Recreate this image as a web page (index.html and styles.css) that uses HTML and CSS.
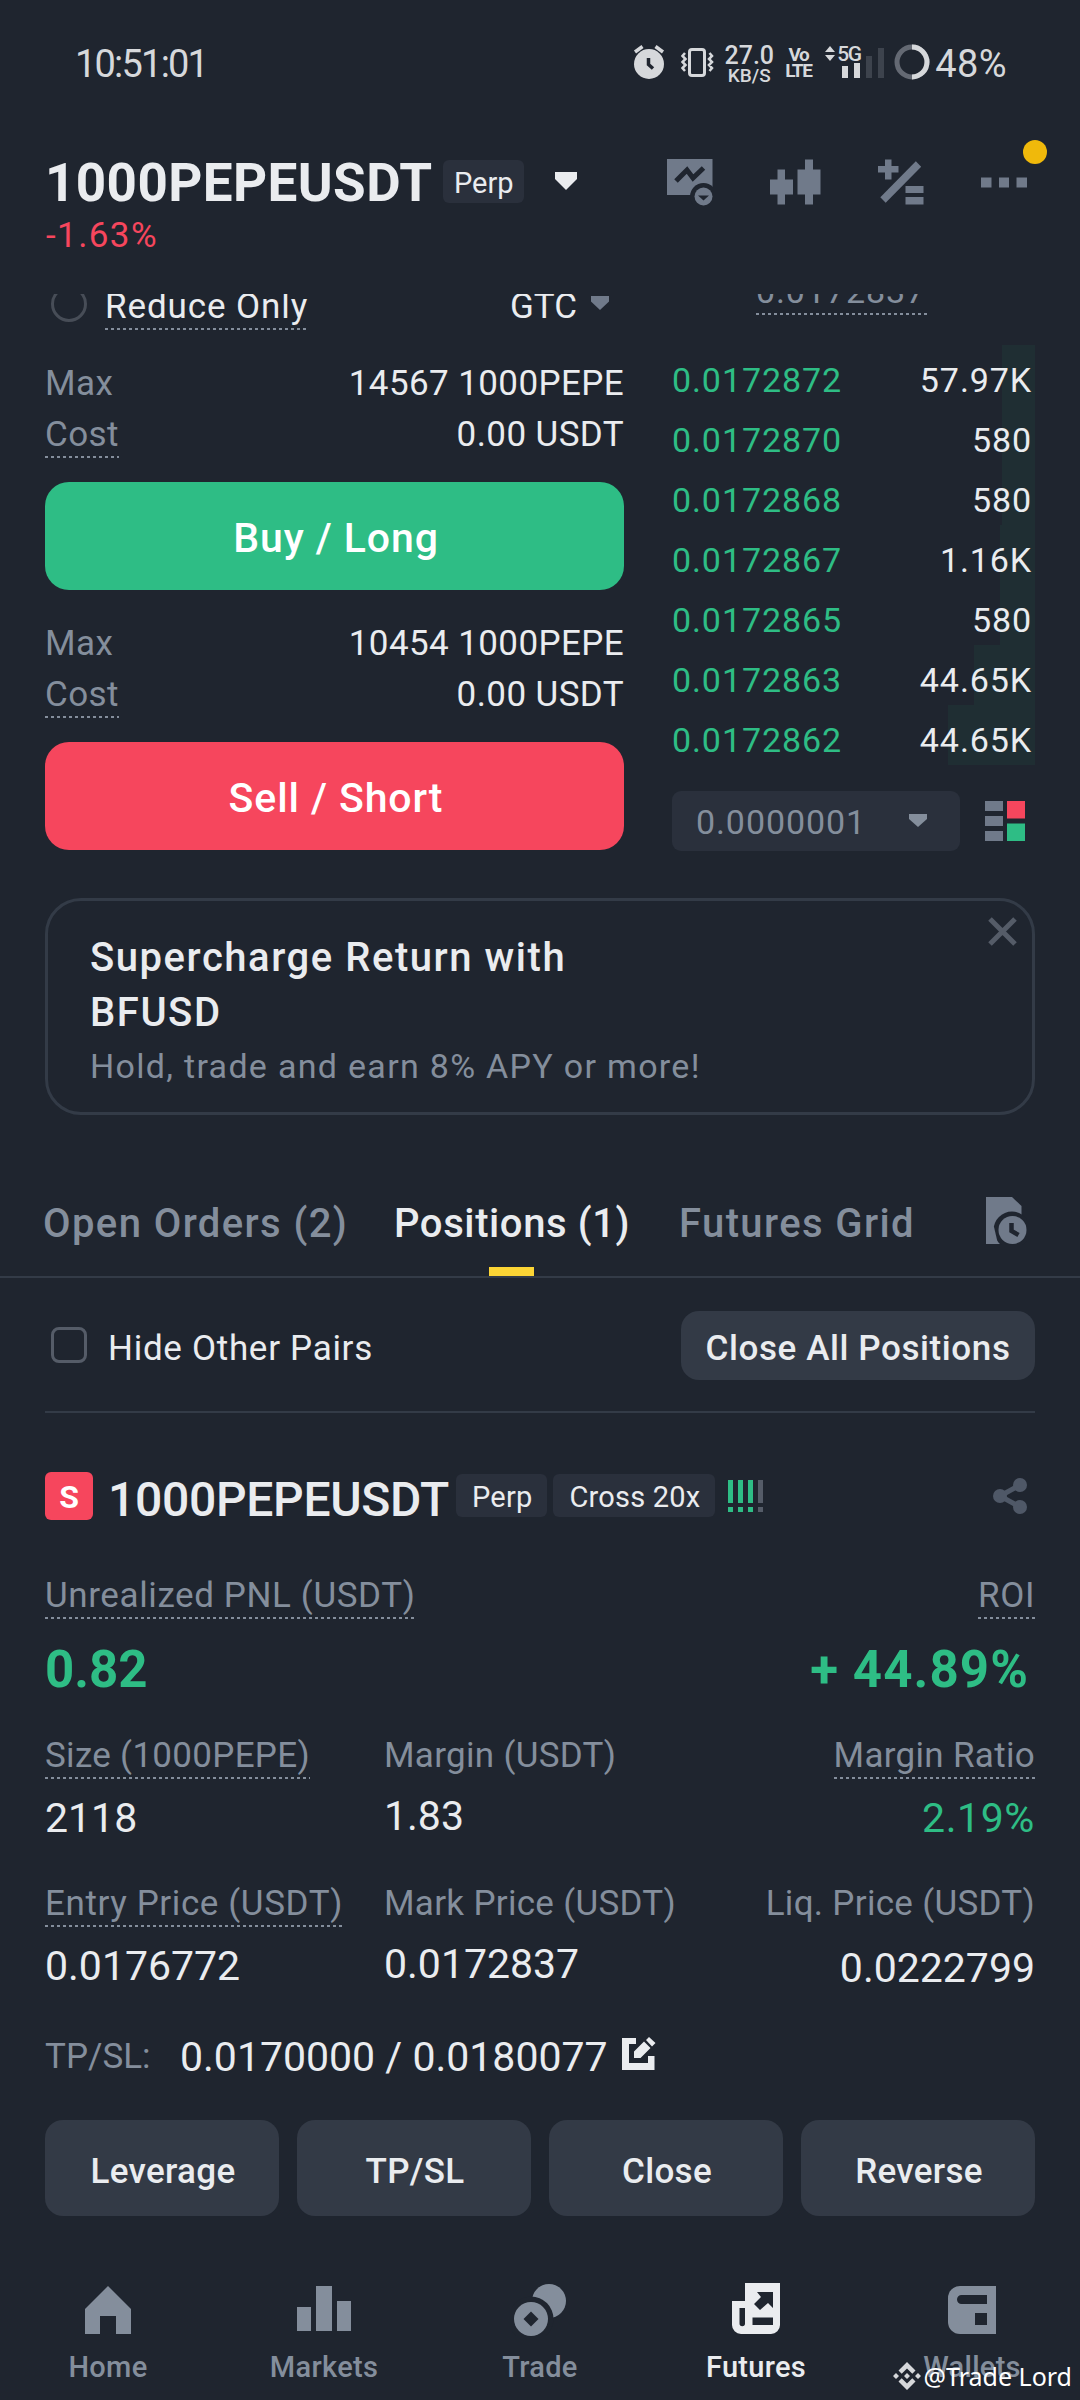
FILE: index.html
```html
<!DOCTYPE html>
<html lang="en">
<head>
  <meta charset="UTF-8">
  <title>1000PEPEUSDT Perp</title>
  <link rel="stylesheet" href="styles.css">
</head>
<body>
  <div class="screen">

    <div class="status-bar">
      <span class="clock">10:51:01</span>
      <div class="status-icons">
        <svg class="alarm" width="32" height="36" viewBox="0 0 32 36">
          <circle cx="16" cy="20" r="15" fill="#d6d8db"/>
          <path d="M2 8l7.500-5.500M30 8l-7.500-5.500" stroke="#d6d8db" stroke-width="3.500"/>
          <path d="M15.500 14v6.500l4.500 4" fill="none" stroke="#1f252f" stroke-width="3.500"/>
        </svg>
        <svg class="vibrate" width="33" height="30" viewBox="0 0 33 30">
          <rect x="8.500" y="2.500" width="15" height="26" rx="2.500" fill="none" stroke="#d6d8db" stroke-width="3"/>
          <path d="M4 6l-2.500 3 3 3-3 3 3 3-3 3 2.500 3M28.500 6l2.500 3-3 3 3 3-3 3 3 3-2.500 3" fill="none" stroke="#d6d8db" stroke-width="2.500"/>
        </svg>
        <div class="speed"><span>27.0</span><small>KB/S</small></div>
        <div class="volte"><span>Vo</span><span>LTE</span></div>
        <div class="signal">
          <svg width="61" height="34" viewBox="0 0 61 34">
            <path d="M1 8l5-6 5 6zM1 11l5 6 5-6z" fill="#d6d8db"/>
            <rect x="18" y="22" width="6" height="12" fill="#d6d8db"/>
            <rect x="30" y="19" width="6" height="15" fill="#d6d8db"/>
            <rect x="42" y="12" width="6" height="22" fill="#3d434d"/>
            <rect x="54" y="4" width="6" height="30" fill="#3d434d"/>
          </svg>
          <span class="net">5G</span>
        </div>
        <svg class="battery" width="36" height="36" viewBox="0 0 36 36">
          <circle cx="18" cy="18" r="15" fill="none" stroke="#646973" stroke-width="5"/>
          <path d="M18 3a15 15 0 0 1 0 30" fill="none" stroke="#d6d8db" stroke-width="5"/>
        </svg>
        <span class="percent">48%</span>
      </div>
    </div>

    <div class="header">
      <div class="pair-row">
        <span class="pair">1000PEPEUSDT</span>
        <span class="tag">Perp</span>
        <svg class="pair-arrow" width="24" height="18" viewBox="0 0 24 18"><path d="M1 0h22v7L12 18 1 7z" fill="#eaecef"/></svg>
        <div class="tools">
          <svg width="46" height="48" viewBox="0 0 46 48">
            <path d="M0 1h45.500v36H0z" fill="#707a8a"/>
            <path d="M9 23l11-11 6 8 10.500-10" fill="none" stroke="#1f252f" stroke-width="5"/>
            <circle cx="36.500" cy="38.500" r="13.500" fill="#1f252f"/>
            <circle cx="36.500" cy="38.500" r="9" fill="#707a8a"/>
            <path d="M31 37.500h11l-5.500 5z" fill="#1f252f"/>
          </svg>
          <svg width="51" height="48" viewBox="0 0 51 48">
            <path d="M7.500 11.500H15v10h8v15h-8v10H7.500v-10H0v-15h7.500zM35 1.500h8v10h7.500v25H43v10h-8v-10h-7.500v-25H35z" fill="#707a8a"/>
          </svg>
          <svg width="46" height="48" viewBox="0 0 46 48">
            <path d="M7 1.500h6.500V8h7v6.500h-7v7H7v-7H0V8h7zM27.500 28h18v7h-18zM27.500 39h18v7.500h-18z" fill="#707a8a"/>
            <path d="M5 42L40.500 6" stroke="#707a8a" stroke-width="7.500"/>
          </svg>
          <svg width="46" height="48" viewBox="0 0 46 48">
            <path d="M0 19.500h10.500v10H0zM18 19.500h10v10H18zM35.500 19.500H46v10H35.500z" fill="#707a8a"/>
          </svg>
          <i class="dot"></i>
        </div>
      </div>
      <div class="change">-1.63%</div>
    </div>

    <div class="trade">
      <div class="form">
        <div class="reduce">
          <i class="radio"></i>
          <span class="dotted">Reduce Only</span>
          <span class="gtc">GTC</span>
          <svg width="18" height="14" viewBox="0 0 18 14"><path d="M0 0h18v5.500L9 14 0 5.500z" fill="#707a8a"/></svg>
        </div>
        <div class="line"><span class="muted">Max</span><span>14567 1000PEPE</span></div>
        <div class="line cost"><span class="muted dotted">Cost</span><span>0.00 USDT</span></div>
        <button class="order buy">Buy / Long</button>
        <div class="line"><span class="muted">Max</span><span>10454 1000PEPE</span></div>
        <div class="line cost"><span class="muted dotted">Cost</span><span>0.00 USDT</span></div>
        <button class="order sell">Sell / Short</button>
      </div>

      <div class="book">
        <div class="mark"><span class="muted dotted">0.0172837</span></div>
        <div class="bid" style="background-size: 33px 100%"><span>0.0172872</span><b>57.97K</b></div>
        <div class="bid" style="background-size: 33px 100%"><span>0.0172870</span><b>580</b></div>
        <div class="bid" style="background-size: 33px 100%"><span>0.0172868</span><b>580</b></div>
        <div class="bid" style="background-size: 35px 100%"><span>0.0172867</span><b>1.16K</b></div>
        <div class="bid" style="background-size: 35px 100%"><span>0.0172865</span><b>580</b></div>
        <div class="bid" style="background-size: 61px 100%"><span>0.0172863</span><b>44.65K</b></div>
        <div class="bid" style="background-size: 87px 100%"><span>0.0172862</span><b>44.65K</b></div>
        <div class="book-foot">
          <div class="tick">
            <span>0.0000001</span>
            <svg width="18" height="13" viewBox="0 0 18 13"><path d="M0 0h18v5L9 13 0 5z" fill="#848e9c"/></svg>
          </div>
          <svg width="40" height="40" viewBox="0 0 40 40">
            <path d="M0 0h18v10H0zM0 15h18v10H0zM0 30h18v10H0z" fill="#707a8a"/>
            <path d="M22 0h18v17.500H22z" fill="#f6465d"/>
            <path d="M22 22.500h18V40H22z" fill="#2ebd85"/>
          </svg>
        </div>
      </div>
    </div>

    <div class="banner">
      <div class="banner-title">Supercharge Return with<br>BFUSD</div>
      <div class="banner-text">Hold, trade and earn 8% APY or more!</div>
      <svg class="banner-close" width="29" height="29" viewBox="0 0 29 29"><path d="M2 2l25 25M27 2L2 27" stroke="#555c68" stroke-width="5"/></svg>
    </div>

    <div class="tabs">
      <span>Open Orders (2)</span>
      <span class="active">Positions (1)</span>
      <span>Futures Grid</span>
      <svg width="41" height="48" viewBox="0 0 41 48">
        <path d="M0 0h26l9.500 9v38H0z" fill="#707a8a"/>
        <circle cx="26" cy="33" r="18.500" fill="#1f252f"/>
        <path d="M0 30h8l4 17H0z" fill="#707a8a"/>
        <circle cx="26.500" cy="33" r="14" fill="#707a8a"/>
        <path d="M25.500 26v8l7 4" fill="none" stroke="#1f252f" stroke-width="4.500"/>
      </svg>
    </div>

    <div class="filter">
      <i class="checkbox"></i>
      <span class="filter-text">Hide Other Pairs</span>
      <button class="close-all">Close All Positions</button>
    </div>

    <div class="position">
      <div class="pos-head">
        <span class="side">S</span>
        <span class="pos-pair">1000PEPEUSDT</span>
        <span class="tag">Perp</span>
        <span class="tag">Cross 20x</span>
        <svg class="adl" width="36" height="32" viewBox="0 0 36 32">
          <path d="M0 0h5v23H0zM10 0h5v23h-5zM20 0h5v23h-5zM0 27h5v5H0zM10 27h5v5h-5zM20 27h5v5h-5z" fill="#2ebd85"/>
          <path d="M30 0h5v23h-5zM30 27h5v5h-5z" fill="#555c68"/>
        </svg>
        <svg class="share" width="34" height="36" viewBox="0 0 34 36">
          <path d="M27 7L7 18l20 11" fill="none" stroke="#4f5867" stroke-width="5"/>
          <circle cx="7" cy="18" r="7" fill="#4f5867"/>
          <circle cx="27" cy="7" r="7" fill="#4f5867"/>
          <circle cx="27" cy="29" r="7" fill="#4f5867"/>
        </svg>
      </div>

      <div class="pnl">
        <span class="muted dotted">Unrealized PNL (USDT)</span>
        <span class="muted dotted">ROI</span>
      </div>
      <div class="pnl-value"><span>0.82</span><span class="roi">+ 44.89%</span></div>

      <div class="stats">
        <div><span class="muted dotted">Size (1000PEPE)</span><strong>2118</strong></div>
        <div><span class="muted">Margin (USDT)</span><strong>1.83</strong></div>
        <div class="right"><span class="muted dotted">Margin Ratio</span><strong class="up">2.19%</strong></div>
        <div><span class="muted dotted entry">Entry Price (USDT)</span><strong>0.0176772</strong></div>
        <div><span class="muted">Mark Price (USDT)</span><strong>0.0172837</strong></div>
        <div class="right"><span class="muted liq">Liq. Price (USDT)</span><strong>0.0222799</strong></div>
      </div>

      <div class="tpsl">
        <span class="muted">TP/SL:</span>
        <strong>0.0170000 / 0.0180077</strong>
        <svg width="34" height="33" viewBox="0 0 34 33">
          <path d="M0 1h14v6H7v19h19v-7h6.500v14H0z" fill="#eaecef"/>
          <path d="M12 21v-6.500L22 4.500l6.500 6.500-10 10zM24 3l3-3 6.500 6-3.500 3.500z" fill="#eaecef"/>
        </svg>
      </div>

      <div class="actions">
        <button>Leverage</button>
        <button>TP/SL</button>
        <button>Close</button>
        <button>Reverse</button>
      </div>
    </div>

    <div class="nav">
      <div>
        <svg width="56" height="56" viewBox="0 0 56 56"><path d="M28 6l23 23v25H36V36H20v18H5V29z" fill="#848e9c"/></svg>
        <span>Home</span>
      </div>
      <div>
        <svg width="56" height="56" viewBox="0 0 56 56"><path d="M1 27h14v24H1zM20 6h16v45H20zM41 21h14v30H41z" fill="#848e9c"/></svg>
        <span>Markets</span>
      </div>
      <div>
        <svg width="56" height="56" viewBox="0 0 56 56">
          <circle cx="37" cy="21" r="17" fill="#848e9c"/>
          <circle cx="19" cy="39" r="22.500" fill="#1f252f"/>
          <circle cx="19" cy="39" r="17" fill="#848e9c"/>
          <path d="M19 31.500l7.500 7.500-7.500 7.500-7.500-7.500z" fill="#1f252f"/>
        </svg>
        <span>Trade</span>
      </div>
      <div class="active">
        <svg width="56" height="56" viewBox="0 0 56 56">
          <path d="M17 3h35v42a9 9 0 0 1-9 9H13a9 9 0 0 1-9-9V21h13z" fill="#eaecef"/>
          <path d="M12 28h5v15.500a2.500 2.500 0 0 1-5.500 0V28zM24.500 37.500H45V45H24.500zM29 12h16v16l-5-5-8 7-6-6 7-7z" fill="#1f252f"/>
        </svg>
        <span>Futures</span>
      </div>
      <div>
        <svg width="56" height="56" viewBox="0 0 56 56">
          <path d="M16 6h36v48H16A12 12 0 0 1 4 42V18A12 12 0 0 1 16 6z" fill="#848e9c"/>
          <path d="M17.500 15H43v9H17.500a4.500 4.500 0 0 1 0-9zM31 33h12v12H31z" fill="#1f252f"/>
        </svg>
        <span>Wallets</span>
      </div>
    </div>

    <div class="watermark">
      <svg width="28" height="28" viewBox="0 0 28 28" fill="#d6d8db">
        <path d="M14 0l8.500 8.500-3.200 3.200L14 6.400l-5.300 5.300-3.200-3.200zM14 28l8.500-8.500-3.200-3.200-5.300 5.300-5.300-5.300-3.200 3.200zM3 11l3 3-3 3-3-3zM25 11l3 3-3 3-3-3zM14 11l3 3-3 3-3-3z"/>
      </svg>
      <span>@Trade Lord</span>
    </div>

  </div>
</body>
</html>
```
FILE: styles.css
```css
* {
  box-sizing: border-box;
}

body {
  margin: 0;
  background: #1f252f;
  color: #eaecef;
  font-family: Roboto, "Liberation Sans", sans-serif;
  font-size: 35px;
  line-height: 42px;
}

button {
  border: none;
  padding: 0;
  font-family: inherit;
  font-weight: 500;
  color: #eaecef;
}

svg {
  display: block;
  flex: none;
}

.screen {
  position: relative;
  width: 1080px;
  height: 2400px;
  overflow: hidden;
}

.muted {
  color: #848e9c;
}

/* dashed help underline */
.dotted {
  padding-bottom: 2px;
  background: repeating-linear-gradient(90deg, #848e9c 0 3px, transparent 3px 6px) left bottom / 100% 2px no-repeat;
}

.tag {
  height: 43px;
  border-radius: 6px;
  background: #2a303c;
  font-size: 29px;
  line-height: 47px;
}

/* Status bar */
.status-bar {
  display: flex;
  justify-content: space-between;
  height: 126px;
  padding: 43px 73px 0 75px;
  color: #d6d8db;
}

.clock {
  font-size: 38px;
  letter-spacing: -1.8px;
}

.status-icons {
  display: flex;
  align-items: flex-start;
}

.alarm {
  margin: 1px 16px 0 0;
}

.vibrate {
  margin: 4px 11px 0 0;
}

.speed {
  display: flex;
  flex-direction: column;
  align-items: center;
  width: 48px;
  margin: 1px 14px 0 0;
  font-weight: 500;
  font-size: 25px;
  line-height: 24px;
}

.speed small {
  font-size: 19px;
  line-height: 16px;
}

.volte {
  display: flex;
  flex-direction: column;
  align-items: center;
  width: 22px;
  margin: 4px 15px 0 0;
  font-size: 19px;
  font-weight: 700;
  line-height: 16px;
  letter-spacing: -1.5px;
}

.signal {
  position: relative;
  margin: 1px 9px 0 0;
}

.net {
  position: absolute;
  top: 0;
  left: 13px;
  font-size: 21px;
  font-weight: 500;
  line-height: 21px;
  letter-spacing: -1.5px;
}

.battery {
  margin: 1px 5px 0 0;
}

.percent {
  font-size: 38px;
  letter-spacing: 0.4px;
}

/* Header */
.header {
  height: 168px;
  padding: 27px 45px 0;
}

.pair-row {
  display: flex;
  align-items: center;
  height: 60px;
}

.pair {
  width: 398px;
  font-size: 53px;
  font-weight: 700;
  line-height: 60px;
  letter-spacing: 0.4px;
  white-space: nowrap;
}

.pair-row .tag {
  width: 81px;
  padding: 0 11px;
  margin-top: -3px;
}

.pair-arrow {
  margin: -4px 0 0 30px;
}

.tools {
  position: relative;
  display: flex;
  align-items: center;
  margin: -2px 0 0 89px;
  gap: 57px;
}

.dot {
  position: absolute;
  top: -18px;
  right: -20px;
  width: 24px;
  height: 24px;
  border-radius: 50%;
  background: #f0b90b;
}

.change {
  margin-top: 2px;
  padding-left: 1px;
  color: #f6465d;
  letter-spacing: 1.4px;
}

/* Order form and order book, scrolled under the header */
.trade {
  display: grid;
  grid-template-columns: 579px 363px;
  gap: 48px;
  height: 604px;
  padding: 0 45px;
  overflow: hidden;
}

.reduce {
  display: flex;
  align-items: flex-start;
  height: 77px;
  margin-top: -8px;
  padding-left: 6px;
}

.reduce .dotted {
  margin-left: 18px;
  letter-spacing: 0.9px;
}

.radio {
  width: 36px;
  height: 36px;
  border: 3px solid #474d57;
  border-radius: 50%;
}

.gtc {
  margin: 0 14px 0 auto;
}

.reduce svg {
  margin: 10px 15px 0 0;
}

.line {
  display: flex;
  justify-content: space-between;
  align-items: flex-start;
  height: 51px;
  letter-spacing: 0.4px;
}

.cost {
  height: 68px;
}

.order {
  display: block;
  width: 100%;
  height: 108px;
  margin-bottom: 33px;
  padding: 3px 0 0 3px;
  border-radius: 24px;
  color: #fff;
  font-size: 41px;
  letter-spacing: 0.9px;
}

.buy {
  background: #2ebd85;
}

.sell {
  background: #f6465d;
}

.mark {
  display: flex;
  height: 75px;
  margin-top: -24px;
  padding-left: 84px;
}

.mark .dotted {
  height: 45px;
  width: 172px;
  font-size: 34px;
  letter-spacing: 0.9px;
}

.bid {
  display: flex;
  justify-content: space-between;
  height: 60px;
  padding: 14px 3px 0 0;
  background: linear-gradient(#1f2e33, #1f2e33) right top no-repeat;
  font-size: 34px;
  letter-spacing: 0.9px;
}

.bid span {
  color: #2ebd85;
}

.bid b {
  font-weight: 400;
}

.book-foot {
  display: flex;
  align-items: center;
  justify-content: space-between;
  height: 60px;
  margin-top: 26px;
  padding-right: 10px;
}

.tick {
  display: flex;
  align-items: center;
  justify-content: space-between;
  width: 288px;
  height: 60px;
  padding: 2px 33px 0 24px;
  border-radius: 9px;
  background: #2a303c;
  color: #848e9c;
  font-size: 34px;
  letter-spacing: 0.9px;
}

.tick svg {
  margin-top: -4px;
}

/* Banner */
.banner {
  position: relative;
  height: 217px;
  margin: 0 45px;
  padding: 29px 0 0 42px;
  border: 3px solid #333b47;
  border-radius: 36px;
}

.banner-title {
  font-size: 40px;
  font-weight: 500;
  line-height: 55px;
  letter-spacing: 1.55px;
}

.banner-text {
  margin-top: 3px;
  color: #848e9c;
  font-size: 34px;
  line-height: 46px;
  letter-spacing: 1.3px;
}

.banner-close {
  position: absolute;
  top: 16px;
  right: 15px;
}

/* Tabs */
.tabs {
  display: grid;
  grid-template-columns: 351px 285px 1fr 41px;
  height: 80px;
  margin-top: 83px;
  padding: 0 53px 0 43px;
  border-bottom: 2px solid #333b47;
  color: #848e9c;
  font-size: 40px;
  font-weight: 500;
  line-height: 51px;
  letter-spacing: 1.4px;
}

.tabs .active {
  position: relative;
  color: #eaecef;
  letter-spacing: 0.6px;
}

.tabs .active::after {
  content: "";
  position: absolute;
  left: 95px;
  bottom: 0;
  width: 45px;
  height: 9px;
  background: #fcd535;
}

.tabs svg {
  margin-top: -1px;
}

/* Filter row */
.filter {
  display: flex;
  align-items: center;
  height: 135px;
  margin: 0 45px;
  padding: 1px 0 0 6px;
  border-bottom: 2px solid #333b47;
}

.checkbox {
  width: 36px;
  height: 36px;
  border: 3px solid #555c68;
  border-radius: 8px;
}

.filter-text {
  margin: 8px 0 0 21px;
  letter-spacing: 0.7px;
}

.close-all {
  width: 354px;
  height: 69px;
  margin-left: auto;
  padding-top: 6px;
  border-radius: 18px;
  background: #333a46;
  font-size: 35px;
  letter-spacing: 0.6px;
}

/* Position card */
.position {
  padding: 59px 45px 0;
}

.pos-head {
  display: flex;
  align-items: flex-start;
  height: 48px;
}

.side {
  width: 48px;
  height: 48px;
  border-radius: 6px;
  background: #f6465d;
  color: #fff;
  font-size: 32px;
  font-weight: 700;
  line-height: 50px;
  text-align: center;
}

.pos-pair {
  width: 348px;
  margin-left: 15px;
  font-size: 48px;
  font-weight: 500;
  line-height: 56px;
  letter-spacing: -0.3px;
}

.pos-head .tag {
  margin: 2px 6px 0 0;
  padding: 0 15px 0 16px;
  letter-spacing: 0.2px;
}

.adl {
  margin: 8px 0 0 7px;
}

.share {
  margin: 6px 8px 0 auto;
}

.pnl {
  display: flex;
  justify-content: space-between;
  margin-top: 55px;
  letter-spacing: 0.6px;
}

.pnl-value {
  display: flex;
  justify-content: space-between;
  margin-top: 21px;
  padding-right: 6px;
  color: #2ebd85;
  font-size: 51px;
  font-weight: 700;
  line-height: 60px;
}

.roi {
  letter-spacing: 1.1px;
}

.stats {
  display: grid;
  grid-template-columns: 339px 1fr auto;
  row-gap: 40px;
  margin-top: 35px;
}

.stats > div {
  display: flex;
  flex-direction: column;
  align-items: flex-start;
  height: 108px;
  letter-spacing: 0.3px;
}

.stats .entry {
  letter-spacing: 0.6px;
}

.stats > .right {
  align-items: flex-end;
}

.stats strong {
  margin-top: 14px;
  font-size: 41px;
  font-weight: 400;
  line-height: 50px;
  letter-spacing: 0;
}

.stats .liq + strong {
  margin-top: 18px;
}

.stats .up {
  color: #2ebd85;
  letter-spacing: 0.6px;
}

.tpsl {
  display: flex;
  margin-top: 41px;
  line-height: 50px;
}

.tpsl .muted {
  width: 135px;
}

.tpsl strong {
  width: 442px;
  font-size: 41px;
  font-weight: 400;
}

.tpsl svg {
  margin-top: 5px;
}

.actions {
  display: grid;
  grid-template-columns: repeat(4, 1fr);
  gap: 18px;
  margin-top: 38px;
}

.actions button {
  height: 96px;
  padding: 6px 0 0 2px;
  border-radius: 18px;
  background: #333a46;
  font-size: 35px;
  letter-spacing: 0.3px;
}

/* Bottom navigation */
.nav {
  display: grid;
  grid-template-columns: repeat(5, 1fr);
  padding-top: 64px;
  color: #848e9c;
  font-size: 29px;
  font-weight: 500;
  line-height: 36px;
  letter-spacing: 0.3px;
}

.nav div {
  display: flex;
  flex-direction: column;
  align-items: center;
  gap: 13px;
}

.nav .active {
  color: #eaecef;
}

/* Author mark over the corner */
.watermark {
  position: absolute;
  right: 8px;
  bottom: 8px;
  display: flex;
  align-items: center;
  gap: 3px;
  color: #fff;
  font-family: "Noto Sans", sans-serif;
  font-size: 25px;
  line-height: 32px;
}
```
